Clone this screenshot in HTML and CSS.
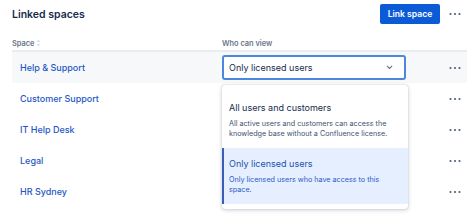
FILE: index.html
```html
<!DOCTYPE html>
<html lang="en">
<head>
<meta charset="utf-8">
<title>Linked spaces</title>
<link rel="stylesheet" href="styles.css">
</head>
<body>
<div class="page">
  <header class="top">
    <h1 class="title">Linked spaces</h1>
    <div class="actions">
      <button class="primary">Link space</button>
      <button class="more" aria-label="More"><svg width="12" height="4" viewBox="0 0 12 4"><circle cx="1.5" cy="2" r="1.1"/><circle cx="6" cy="2" r="1.1"/><circle cx="10.5" cy="2" r="1.1"/></svg></button>
    </div>
  </header>
  <div class="table">
    <div class="thead">
      <div class="th">Space <svg class="sort" width="5" height="8" viewBox="0 0 5 8"><path d="M2.5 0.5 L4.5 3 H0.5 Z M2.5 7.5 L4.5 5 H0.5 Z"/></svg></div>
      <div class="th">Who can view</div>
      <div class="th"></div>
    </div>
    <div class="row is-hover">
      <div class="cell"><a class="space" href="#">Help &amp; Support</a></div>
      <div class="cell cell-select">
        <div class="select">
          <span>Only licensed users</span>
          <svg class="chev" width="7" height="5" viewBox="0 0 7 5"><path d="M1.2 1.2 L3.5 3.5 L5.8 1.2" fill="none" stroke="#6b778c" stroke-width="1.1" stroke-linecap="round" stroke-linejoin="round"/></svg>
        </div>
        <div class="menu">
          <div class="option">
            <div class="opt-title">All users and customers</div>
            <div class="opt-desc">All active users and customers can access the knowledge base without a Confluence license.</div>
          </div>
          <div class="option is-selected">
            <div class="opt-title">Only licensed users</div>
            <div class="opt-desc">Only licensed users who have access to this space.</div>
          </div>
        </div>
      </div>
      <div class="cell cell-more"><button class="more" aria-label="More"><svg width="12" height="4" viewBox="0 0 12 4"><circle cx="1.5" cy="2" r="1.1"/><circle cx="6" cy="2" r="1.1"/><circle cx="10.5" cy="2" r="1.1"/></svg></button></div>
    </div>
    <div class="row">
      <div class="cell"><a class="space" href="#">Customer Support</a></div>
      <div class="cell"></div>
      <div class="cell cell-more"><button class="more" aria-label="More"><svg width="12" height="4" viewBox="0 0 12 4"><circle cx="1.5" cy="2" r="1.1"/><circle cx="6" cy="2" r="1.1"/><circle cx="10.5" cy="2" r="1.1"/></svg></button></div>
    </div>
    <div class="row">
      <div class="cell"><a class="space" href="#">IT Help Desk</a></div>
      <div class="cell"></div>
      <div class="cell cell-more"><button class="more" aria-label="More"><svg width="12" height="4" viewBox="0 0 12 4"><circle cx="1.5" cy="2" r="1.1"/><circle cx="6" cy="2" r="1.1"/><circle cx="10.5" cy="2" r="1.1"/></svg></button></div>
    </div>
    <div class="row">
      <div class="cell"><a class="space" href="#">Legal</a></div>
      <div class="cell"></div>
      <div class="cell cell-more"><button class="more" aria-label="More"><svg width="12" height="4" viewBox="0 0 12 4"><circle cx="1.5" cy="2" r="1.1"/><circle cx="6" cy="2" r="1.1"/><circle cx="10.5" cy="2" r="1.1"/></svg></button></div>
    </div>
    <div class="row">
      <div class="cell"><a class="space" href="#">HR Sydney</a></div>
      <div class="cell"></div>
      <div class="cell cell-more"><button class="more" aria-label="More"><svg width="12" height="4" viewBox="0 0 12 4"><circle cx="1.5" cy="2" r="1.1"/><circle cx="6" cy="2" r="1.1"/><circle cx="10.5" cy="2" r="1.1"/></svg></button></div>
    </div>
  </div>
</div>
</body>
</html>
```
FILE: styles.css
```css
* { box-sizing: border-box; }
html, body { margin: 0; padding: 0; background: #ffffff; }
body {
  font-family: Inter, "Noto Sans", "Liberation Sans", sans-serif;
  color: #172b4d;
  width: 474px;
  height: 217px;
  overflow: hidden;
}
.page { padding: 0 7px 0 12px; }

.top {
  height: 28px;
  display: flex;
  align-items: center;
  justify-content: space-between;
}
.title {
  margin: 0;
  font-size: 10.5px;
  font-weight: 600;
  line-height: 14px;
  color: #172b4d;
  padding-top: 1px;
}
.actions { display: flex; align-items: center; gap: 3px; }
.primary {
  height: 20px;
  width: 60px;
  padding: 0;
  border: 0;
  border-radius: 2px;
  background: #0c5bd6;
  color: #ffffff;
  font-family: inherit;
  font-size: 8.6px;
  font-weight: 600;
}
.more {
  width: 24px;
  height: 20px;
  padding: 0;
  border: 0;
  background: transparent;
  display: flex;
  align-items: center;
  justify-content: center;
}
.more svg { fill: #505f79; }

.table { position: relative; }
.thead, .row {
  display: grid;
  grid-template-columns: 210px 186px 1fr;
}
.thead {
  height: 24px;
  padding-top: 8px;
  border-bottom: 2px solid #ebecf0;
  align-items: center;
}
.th {
  font-size: 7.4px;
  font-weight: 600;
  color: #6b778c;
  display: flex;
  align-items: center;
  gap: 2px;
}
.sort { fill: #dfe1e6; }

.row {
  height: 31px;
  align-items: center;
}
.row.is-hover { background: #f7f8f9; }
.cell { display: flex; align-items: center; }
.space {
  padding-left: 8px;
  font-size: 9px;
  font-weight: 500;
  color: #1f58c6;
  text-decoration: none;
}
.cell-select { position: relative; }
.select {
  width: 184px;
  height: 25px;
  border: 2px solid #4c86e0;
  border-radius: 3px;
  background: #ffffff;
  display: flex;
  align-items: center;
  justify-content: space-between;
  padding: 0 11px 0 5px;
  font-size: 9px;
  color: #172b4d;
}
.chev { display: block; }
.cell-more { justify-content: flex-end; }

.menu {
  position: absolute;
  top: 30px;
  left: 0;
  width: 186px;
  background: #ffffff;
  border-radius: 3px;
  box-shadow: 0 1px 4px rgba(9, 30, 66, 0.22), 0 0 1px rgba(9, 30, 66, 0.3);
  padding: 7px 0 5px;
  z-index: 2;
}
.option {
  border-left: 2px solid transparent;
  padding: 9px 8px 9px 5px;
}
.option.is-selected {
  background: #e6efff;
  border-left-color: #3a5fb8;
}
.opt-title {
  font-size: 9px;
  line-height: 13px;
  color: #172b4d;
}
.opt-desc {
  margin-top: 5px;
  font-size: 7.2px;
  line-height: 10px;
  color: #42526e;
}
.is-selected .opt-title { color: #2350b0; }
.is-selected .opt-desc { color: #2c5ac4; }
```
